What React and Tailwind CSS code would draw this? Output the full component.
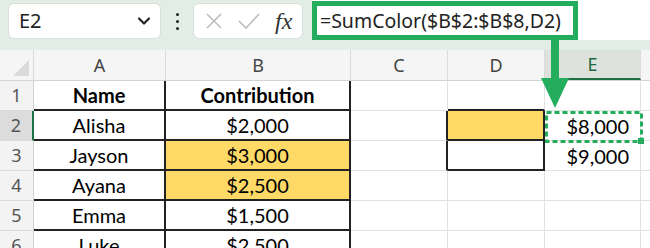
import React from "react";

const G = "#23ad5c";
const cols = [34, 132, 185, 97, 97, 96, 9];

const rows = [
  { n: "1", a: "Name", b: "Contribution", bold: true },
  { n: "2", a: "Alisha", b: "$2,000", d: "yellow", e: "$8,000" },
  { n: "3", a: "Jayson", b: "$3,000", by: true, d: "white", e: "$9,000" },
  { n: "4", a: "Ayana", b: "$2,500", by: true },
  { n: "5", a: "Emma", b: "$1,500" },
  { n: "6", a: "Luke", b: "$2,500" },
];

function Cell({ w, className = "", children }) {
  return (
    <div
      style={{ width: w }}
      className={"h-[30px] shrink-0 flex items-center box-border " + className}
    >
      {children}
    </div>
  );
}

export default function App() {
  return (
    <div
      className="relative w-[650px] h-[248px] overflow-hidden bg-white"
      style={{ fontFamily: "Lato, 'Liberation Sans', sans-serif" }}
    >
      {/* toolbar */}
      <div className="flex items-start h-[50px] bg-[#e2ede6]">
        <div className="ml-[8px] mt-[3px] w-[153px] h-[36px] bg-white rounded-[6px] border border-[#d9dfdb] flex items-center pl-[10px] pr-[9px] justify-between">
          <span
            className="text-[20px] text-[#222]"
            style={{ fontFamily: "'Noto Sans', sans-serif" }}
          >
            E2
          </span>
          <svg width="14" height="10" viewBox="0 0 14 10">
            <path d="M2 2.5 L7 7.5 L12 2.5" fill="none" stroke="#222" strokeWidth="2.2" strokeLinecap="round" strokeLinejoin="round" />
          </svg>
        </div>
        <div className="w-[32px] h-[42px] flex flex-col items-center justify-center gap-[4px]">
          <div className="w-[3px] h-[3px] rounded-full bg-[#222]" />
          <div className="w-[3px] h-[3px] rounded-full bg-[#222]" />
          <div className="w-[3px] h-[3px] rounded-full bg-[#222]" />
        </div>
        <div className="mt-[3px] w-[110px] h-[36px] bg-white rounded-[6px] border border-[#d9dfdb] flex items-center">
          <svg width="20" height="20" viewBox="0 0 20 20" className="ml-[10px]">
            <path d="M3 3 L17 17 M17 3 L3 17" stroke="#bdbdbd" strokeWidth="1.6" fill="none" />
          </svg>
          <svg width="26" height="20" viewBox="0 0 26 20" className="ml-[12px]">
            <path d="M3 10 L10 17 L23 3" stroke="#bdbdbd" strokeWidth="1.6" fill="none" />
          </svg>
          <span
            className="ml-[13px] text-[24px] italic text-[#333] leading-none"
            style={{ fontFamily: "'Liberation Serif', serif" }}
          >
            fx
          </span>
        </div>
        <div className="ml-[9px] flex-1 h-[40px] bg-white" />
      </div>

      {/* formula highlight box */}
      <div
        className="absolute left-[312px] top-[1px] w-[266px] h-[39px] border-[5px] flex items-center pl-[3px]"
        style={{ borderColor: G }}
      >
        <span
          className="text-[19.5px] text-[#222] whitespace-nowrap"
          style={{ fontFamily: "'Noto Sans', sans-serif" }}
        >
          =SumColor($B$2:$B$8,D2)
        </span>
      </div>

      {/* column header row */}
      <div className="flex h-[31px] bg-[#f5f5f5] border-b border-[#d4d4d4] text-[#444]" style={{ fontFamily: "'Noto Sans', sans-serif" }}>
        <div style={{ width: cols[0] }} className="shrink-0 h-full relative border-r border-[#dadada]">
          <svg className="absolute right-[4px] bottom-[4px]" width="16" height="16" viewBox="0 0 16 16">
            <path d="M16 0 L16 16 L0 16 Z" fill="#dadada" />
          </svg>
        </div>
        {["A", "B", "C", "D", "E"].map((l, i) => (
          <div
            key={l}
            style={{ width: cols[i + 1] }}
            className={
              "shrink-0 h-full flex items-center justify-center text-[18px] border-r border-[#dadada] " +
              (l === "E" ? "bg-[#dde2df] text-[#1e6b40] border-b-2 border-b-[#1e7145]" : "")
            }
          >
            {l}
          </div>
        ))}
        <div className="flex-1" />
      </div>

      {/* rows */}
      {rows.map((r, ri) => (
        <div key={r.n} className="flex text-[20px] text-black">
          <Cell
            w={cols[0]}
            className={
              "justify-center text-[18px] text-[#555] border-b border-[#dadada] " +
              (r.n === "2"
                ? "bg-[#dcdcdc] border-r-2 border-r-[#1e7145]"
                : "bg-[#f3f3f3] border-r border-r-[#d0d0d0]")
            }
          >
            <span style={{ fontFamily: "'Noto Sans', sans-serif" }}>{r.n}</span>
          </Cell>
          <Cell
            w={cols[1]}
            className={"justify-center border-r-2 border-b-2 border-[#222] " + (r.bold ? "font-bold" : "")}
          >
            {r.a}
          </Cell>
          <Cell
            w={cols[2]}
            className={
              "justify-center border-r-2 border-b-2 border-[#222] " +
              (r.bold ? "font-bold " : "") +
              (r.by ? "bg-[#ffd966]" : "")
            }
          >
            {r.b}
          </Cell>
          <Cell
            w={cols[3]}
            className={
              "border-b border-b-[#e1e1e1] " +
              (r.d ? "border-r-2 border-r-[#222]" : "border-r border-r-[#e1e1e1]")
            }
          />
          <Cell
            w={cols[4]}
            className={
              (r.d || ri === 0 ? "border-b-2 border-b-[#222] " : "border-b border-b-[#e1e1e1] ") +
              (r.d ? "border-r-2 border-r-[#222] " : "border-r border-r-[#e1e1e1] ") +
              (r.d === "yellow" ? "bg-[#ffd966]" : "")
            }
          />
          <Cell
            w={cols[5]}
            className="justify-end pr-[11px] border-r border-b border-[#e1e1e1]"
          >
            {r.e || ""}
          </Cell>
          <div className="flex-1 h-[30px] border-b border-[#e1e1e1]" />
        </div>
      ))}

      {/* arrow annotation */}
      <svg className="absolute left-[538px] top-[38px]" width="34" height="72" viewBox="0 0 34 72">
        <rect x="13" y="0" width="8" height="42" fill={G} />
        <path d="M3 40 L31 40 L17 70 Z" fill={G} />
      </svg>

      {/* marching ants on E2 */}
      <svg className="absolute left-[544px] top-[110px]" width="102" height="38" viewBox="0 0 102 38">
        <rect x="2.5" y="2.5" width="95" height="29" fill="none" stroke={G} strokeWidth="3" strokeDasharray="5 3" />
        <rect x="94" y="28" width="6" height="6" fill={G} />
      </svg>
    </div>
  );
}
